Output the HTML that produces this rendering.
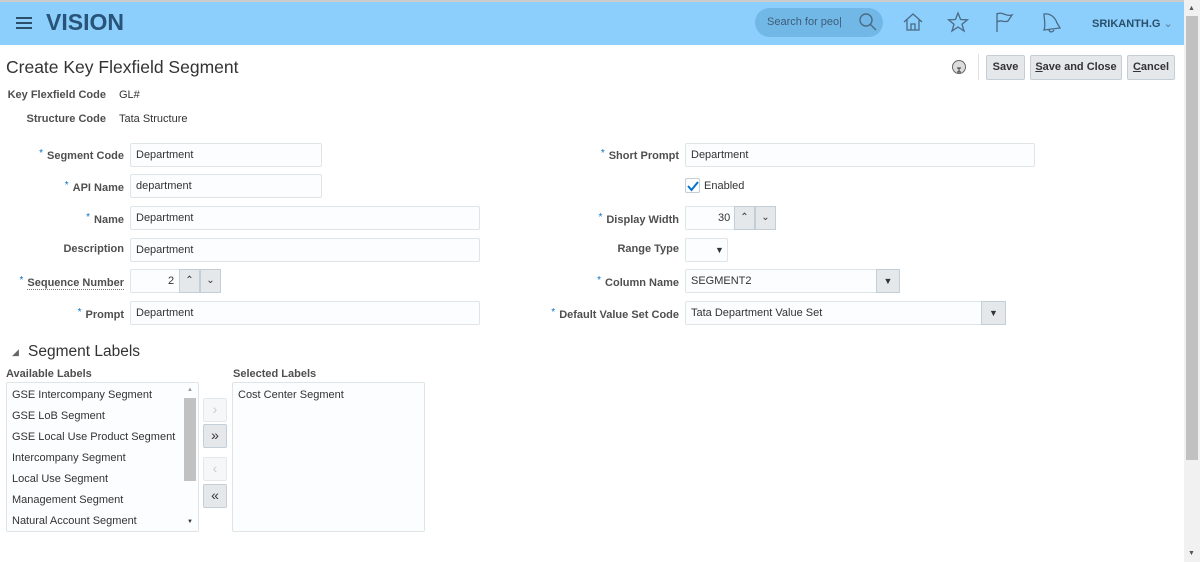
<!DOCTYPE html>
<html><head><meta charset="utf-8"><style>
*{box-sizing:border-box;margin:0;padding:0}
body{width:1200px;height:562px;overflow:hidden;background:#fff;font-family:"Liberation Sans",Arial,sans-serif;color:#333;position:relative;font-size:11px}
.a{position:absolute}
.hdr{left:0;top:0;width:1184px;height:45px;background:#8ccffc;border-top:2px solid #ccc}
.lbl{position:absolute;text-align:right;font-weight:bold;color:#4f4f4f;font-size:11px;white-space:nowrap}
.lbl i{color:#0572ce;font-style:normal;font-weight:normal;margin-right:4px;vertical-align:3px;font-size:10px}
.inp{position:absolute;height:24px;border:1px solid #dfe4e7;border-radius:2px;background:#fcfdfe;padding:0 5px;line-height:22px;font-size:11px;color:#333}
.btn{position:absolute;height:25px;border:1px solid #c4ced7;border-radius:2px;background:#e4e8ea;font-weight:bold;font-size:11px;line-height:23px;text-align:center;color:#333}
.spin{position:absolute;top:-1px;height:24px;width:21px;border:1px solid #c4ced7;background:#e4e8ea;text-align:center;line-height:22px;font-size:10px;color:#333}
.li{position:absolute;left:12px;font-size:11px;color:#333}
</style></head><body>
<div class="a hdr"></div>
<div class="a" style="left:16px;top:17px;width:16px;height:2px;background:#2b4f6b;box-shadow:0 5px 0 #2b4f6b,0 10px 0 #2b4f6b"></div>
<div class="a" style="left:46px;top:9px;font-size:23px;font-weight:bold;color:#275478;letter-spacing:0px">VISION</div>
<div class="a" style="left:755px;top:8px;width:128px;height:29px;border-radius:15px;background:#72b8e6"></div>
<div class="a" style="left:767px;top:16px;font-size:11px;color:#3d5d78">Search for peo|</div>
<svg class="a" style="left:858px;top:12px" width="20" height="20"><circle cx="8" cy="8" r="6" fill="none" stroke="#4a6a85" stroke-width="1.4"/><line x1="12.5" y1="12.5" x2="18" y2="18" stroke="#4a6a85" stroke-width="1.4"/></svg>
<svg class="a" style="left:902px;top:12px" width="22" height="20"><path d="M2 10 L11 2 L20 10 M5 8 V18 H17 V8 M9 18 V12 H13 V18" fill="none" stroke="#4a6a85" stroke-width="1.3"/></svg>
<svg class="a" style="left:947px;top:11px" width="22" height="22"><path d="M11 2 L13.6 8.5 L20.5 8.8 L15 13.2 L17 20 L11 16 L5 20 L7 13.2 L1.5 8.8 L8.4 8.5 Z" fill="none" stroke="#4a6a85" stroke-width="1.3"/></svg>
<svg class="a" style="left:994px;top:11px" width="22" height="22"><path d="M3 2 V21 M3 3 C8 0 12 6 18 4 L14 10 C10 12 7 8 3 11" fill="none" stroke="#4a6a85" stroke-width="1.3"/></svg>
<svg class="a" style="left:1040px;top:11px" width="22" height="22"><path d="M4 3 C10 2 15 6 17 12 L20 17 L4 19 C6 14 4 8 4 3 Z M9 19 C10 22 13 21 14 19" fill="none" stroke="#4a6a85" stroke-width="1.3"/></svg>
<div class="a" style="left:1092px;top:17px;font-size:11px;font-weight:bold;color:#2b4f6b">SRIKANTH.G <span style="font-weight:normal;color:#5b7a93">&#8964;</span></div>
<div class="a" style="left:1184px;top:0;width:16px;height:562px;background:#f1f1f1"></div>
<div class="a" style="left:1186px;top:16px;width:12px;height:444px;background:#c1c1c1"></div>
<div class="a" style="left:1188px;top:5px;font-size:7px;color:#555">&#9650;</div>
<div class="a" style="left:1188px;top:550px;font-size:7px;color:#555">&#9660;</div>

<div class="a" style="left:6px;top:57px;font-size:17.5px;color:#333">Create Key Flexfield Segment</div>
<svg class="a" style="left:951px;top:59px" width="16" height="16"><circle cx="8" cy="8" r="6.5" fill="#ddd" stroke="#666"/><path d="M6 9h4M8 9v4M6 13h4" stroke="#333"/></svg>
<div class="a" style="left:978px;top:54px;width:1px;height:26px;background:#e0e0e0"></div>
<div class="btn" style="left:986px;top:55px;width:39px">Save</div>
<div class="btn" style="left:1030px;top:55px;width:92px"><u>S</u>ave and Close</div>
<div class="btn" style="left:1127px;top:55px;width:48px"><u>C</u>ancel</div>

<div class="lbl" style="left:0;width:106px;top:89px">Key Flexfield Code</div>
<div class="a" style="left:119px;top:89px">GL#</div>
<div class="lbl" style="left:0;width:106px;top:113px">Structure Code</div>
<div class="a" style="left:119px;top:113px">Tata Structure</div>

<div class="lbl" style="left:0;width:124px;top:148px"><i>*</i>Segment Code</div>
<div class="inp" style="left:130px;top:143px;width:192px">Department</div>
<div class="lbl" style="left:0;width:124px;top:180px"><i>*</i>API Name</div>
<div class="inp" style="left:130px;top:174px;width:192px">department</div>
<div class="lbl" style="left:0;width:124px;top:212px"><i>*</i>Name</div>
<div class="inp" style="left:130px;top:206px;width:350px">Department</div>
<div class="lbl" style="left:0;width:124px;top:243px">Description</div>
<div class="inp" style="left:130px;top:238px;width:350px">Department</div>
<div class="lbl" style="left:0;width:124px;top:275px"><i>*</i><span style="border-bottom:1px dotted #777">Sequence Number</span></div>
<div class="inp" style="left:130px;top:269px;width:91px;padding:0"><span style="position:absolute;left:37px;top:0">2</span><div class="spin" style="left:48px">&#8963;</div><div class="spin" style="left:69px">&#8964;</div></div>
<div class="lbl" style="left:0;width:124px;top:307px"><i>*</i>Prompt</div>
<div class="inp" style="left:130px;top:301px;width:350px">Department</div>

<div class="lbl" style="left:500px;width:179px;top:148px"><i>*</i>Short Prompt</div>
<div class="inp" style="left:685px;top:143px;width:350px">Department</div>
<div class="a" style="left:685px;top:178px;width:15px;height:15px;border:1px solid #c4ced7;border-radius:2px;background:#fff"></div>
<svg class="a" style="left:686px;top:179px" width="14" height="14"><path d="M2 7 L5.5 11 L12 3" fill="none" stroke="#0572ce" stroke-width="2"/></svg>
<div class="a" style="left:704px;top:180px">Enabled</div>
<div class="lbl" style="left:500px;width:179px;top:212px"><i>*</i>Display Width</div>
<div class="inp" style="left:685px;top:206px;width:90px;padding:0"><span style="position:absolute;left:32px;top:0">30</span><div class="spin" style="left:48px">&#8963;</div><div class="spin" style="left:69px">&#8964;</div></div>
<div class="lbl" style="left:500px;width:179px;top:243px">Range Type</div>
<div class="inp" style="left:685px;top:238px;width:43px"><span style="position:absolute;left:29px;top:0;font-size:9px">&#9660;</span></div>
<div class="lbl" style="left:500px;width:179px;top:275px"><i>*</i>Column Name</div>
<div class="inp" style="left:685px;top:269px;width:215px">SEGMENT2<div class="spin" style="left:190px;width:24px;font-size:9px">&#9660;</div></div>
<div class="lbl" style="left:500px;width:179px;top:307px"><i>*</i>Default Value Set Code</div>
<div class="inp" style="left:685px;top:301px;width:321px">Tata Department Value Set<div class="spin" style="left:295px;width:25px;font-size:9px">&#9660;</div></div>

<div class="a" style="left:12px;top:347px;font-size:9px;color:#666">&#9698;</div>
<div class="a" style="left:28px;top:343px;font-size:15.5px;color:#333">Segment Labels</div>
<div class="lbl" style="left:6px;top:368px">Available Labels</div>
<div class="lbl" style="left:233px;top:368px">Selected Labels</div>
<div class="a" style="left:6px;top:382px;width:193px;height:150px;border:1px solid #dfe4e7;border-radius:2px;background:#fcfdfe"></div>
<div class="a" style="left:184px;top:398px;width:12px;height:83px;background:#c1c1c1"></div>
<div class="a" style="left:187px;top:387px;font-size:6px;color:#999">&#9650;</div>
<div class="a" style="left:187px;top:519px;font-size:6px;color:#333">&#9660;</div>
<div class="li" style="top:389px">GSE Intercompany Segment</div>
<div class="li" style="top:410px">GSE LoB Segment</div>
<div class="li" style="top:431px">GSE Local Use Product Segment</div>
<div class="li" style="top:452px">Intercompany Segment</div>
<div class="li" style="top:473px">Local Use Segment</div>
<div class="li" style="top:494px">Management Segment</div>
<div class="li" style="top:515px">Natural Account Segment</div>
<div class="btn" style="left:203px;top:398px;width:24px;height:24px;background:#f6f7f8;border-color:#e4e8ea;color:#ccc;font-weight:normal;font-size:14px;line-height:21px">&#8250;</div>
<div class="btn" style="left:203px;top:424px;width:24px;height:24px;font-size:14px;line-height:21px;font-weight:normal">&#187;</div>
<div class="btn" style="left:203px;top:457px;width:24px;height:24px;background:#f6f7f8;border-color:#e4e8ea;color:#ccc;font-weight:normal;font-size:14px;line-height:21px">&#8249;</div>
<div class="btn" style="left:203px;top:484px;width:24px;height:24px;font-size:14px;line-height:21px;font-weight:normal">&#171;</div>
<div class="a" style="left:232px;top:382px;width:193px;height:150px;border:1px solid #dfe4e7;border-radius:2px;background:#fcfdfe"></div>
<div class="a" style="left:238px;top:389px">Cost Center Segment</div>
</body></html>
